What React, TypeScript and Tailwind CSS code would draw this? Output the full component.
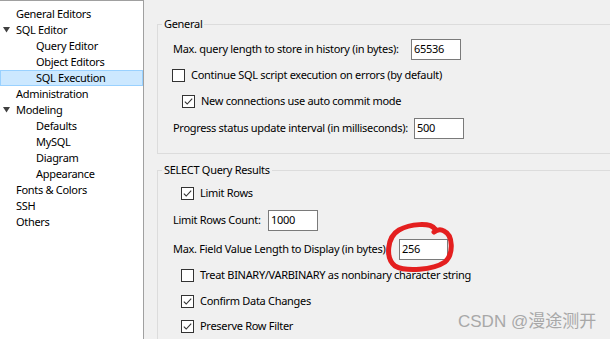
import React from 'react';

type TreeItem = { label: string; level: 0 | 1; expanded?: boolean; selected?: boolean };

const treeItems: TreeItem[] = [
  { label: 'General Editors', level: 0 },
  { label: 'SQL Editor', level: 0, expanded: true },
  { label: 'Query Editor', level: 1 },
  { label: 'Object Editors', level: 1 },
  { label: 'SQL Execution', level: 1, selected: true },
  { label: 'Administration', level: 0 },
  { label: 'Modeling', level: 0, expanded: true },
  { label: 'Defaults', level: 1 },
  { label: 'MySQL', level: 1 },
  { label: 'Diagram', level: 1 },
  { label: 'Appearance', level: 1 },
  { label: 'Fonts & Colors', level: 0 },
  { label: 'SSH', level: 0 },
  { label: 'Others', level: 0 },
];

const Checkbox: React.FC<{ checked?: boolean }> = ({ checked }) => (
  <span className="flex h-[13px] w-[13px] shrink-0 items-center justify-center border border-[#333333] bg-white">
    {checked && (
      <svg width="11" height="11" viewBox="0 0 11 11">
        <path d="M1.8 5.6 L4.2 8 L9.2 2.6" fill="none" stroke="#333333" strokeWidth="1.1" />
      </svg>
    )}
  </span>
);

const TextBox: React.FC<{ value: string; width: string }> = ({ value, width }) => (
  <div className={`flex h-[21px] shrink-0 items-center border border-[#7a7a7a] bg-white pl-[2px] ${width}`}>{value}</div>
);

const CheckRow: React.FC<{ label: string; checked?: boolean; indent: string; spacing: string }> = ({
  label,
  checked,
  indent,
  spacing,
}) => (
  <div className={`flex h-[21px] items-center gap-[6px] ${indent} ${spacing}`}>
    <Checkbox checked={checked} />
    <span className="whitespace-nowrap">{label}</span>
  </div>
);

const App: React.FC = () => {
  return (
    <div className="relative flex h-[339px] w-[610px] overflow-hidden bg-[#f0f0f0] font-['Noto_Sans','Open_Sans',sans-serif] text-[11px] tracking-[-0.3px] text-black">
      {/* tree */}
      <div className="h-full w-[144px] shrink-0 border-r border-t border-[#a0a0a0] bg-white pt-[5px]">
        {treeItems.map((item) => (
          <div
            key={item.label}
            className={`flex h-[16px] items-center leading-[16px] ${
              item.selected ? 'border border-[#99d1ff] bg-[#cce8ff]' : ''
            }`}
          >
            {item.level === 0 ? (
              <span className="flex w-[16px] shrink-0 items-center pl-[3px]">
                {item.expanded && (
                  <svg width="7" height="6" viewBox="0 0 7 6">
                    <path d="M0 0 H7 L3.5 5.5 Z" fill="#404040" />
                  </svg>
                )}
              </span>
            ) : (
              <span className={`shrink-0 ${item.selected ? 'w-[35px]' : 'w-[36px]'}`} />
            )}
            <span className="whitespace-nowrap">{item.label}</span>
          </div>
        ))}
      </div>

      {/* settings */}
      <div className="flex-1 overflow-hidden pl-[13px]">
        <fieldset className="mt-[16px] w-[470px] border border-[#dcdcdc] px-[15px] pb-[14px]">
          <legend className="-ml-[11px] px-[2px] leading-[16px]">General</legend>
          <div className="mt-[7px] flex h-[21px] items-center">
            <span className="w-[238px] whitespace-nowrap">Max. query length to store in history (in bytes):</span>
            <TextBox value="65536" width="w-[50px]" />
          </div>
          <CheckRow label="Continue SQL script execution on errors (by default)" indent="-ml-[1px]" spacing="mt-[5px]" />
          <CheckRow label="New connections use auto commit mode" checked indent="ml-[9px]" spacing="mt-[5px]" />
          <div className="mt-[6px] flex h-[21px] items-center">
            <span className="w-[241px] whitespace-nowrap">Progress status update interval (in milliseconds):</span>
            <TextBox value="500" width="w-[50px]" />
          </div>
        </fieldset>

        <fieldset className="mt-[8px] w-[470px] border border-[#dcdcdc] px-[15px] pb-[14px]">
          <legend className="-ml-[11px] px-[2px] leading-[16px]">SELECT Query Results</legend>
          <CheckRow label="Limit Rows" checked indent="ml-[8px]" spacing="mt-[5px]" />
          <div className="mt-[6px] flex h-[21px] items-center">
            <span className="w-[95px] whitespace-nowrap">Limit Rows Count:</span>
            <TextBox value="1000" width="w-[50px]" />
          </div>
          <div className="mt-[8px] flex h-[21px] items-center">
            <span className="w-[226px] whitespace-nowrap">Max. Field Value Length to Display (in bytes)</span>
            <TextBox value="256" width="w-[49px]" />
          </div>
          <CheckRow label="Treat BINARY/VARBINARY as nonbinary character string" indent="ml-[8px]" spacing="mt-[5px]" />
          <CheckRow label="Confirm Data Changes" checked indent="ml-[8px]" spacing="mt-[5px]" />
          <CheckRow label="Preserve Row Filter" checked indent="ml-[8px]" spacing="mt-[4px]" />
        </fieldset>
      </div>

      {/* hand-drawn highlight */}
      <svg className="absolute left-[380px] top-[216px]" width="80" height="62" viewBox="0 0 80 62">
        <path
          d="M55 13 C50 6, 30 8, 19 14 C7 21, 5 42, 15 50 C26 56, 53 54, 65 46 C74 38, 73 19, 64 15 C61 13, 58 13, 54 16"
          fill="none"
          stroke="#e41f1f"
          strokeWidth="5"
          strokeLinecap="round"
        />
      </svg>

      <div className="absolute left-[458px] top-[311px] whitespace-nowrap font-['Liberation_Sans','Noto_Sans_CJK_SC',sans-serif] text-[17px] leading-[22px] tracking-normal text-[#a8a8a8]">
        CSDN @漫途测开
      </div>
    </div>
  );
};

export default App;
